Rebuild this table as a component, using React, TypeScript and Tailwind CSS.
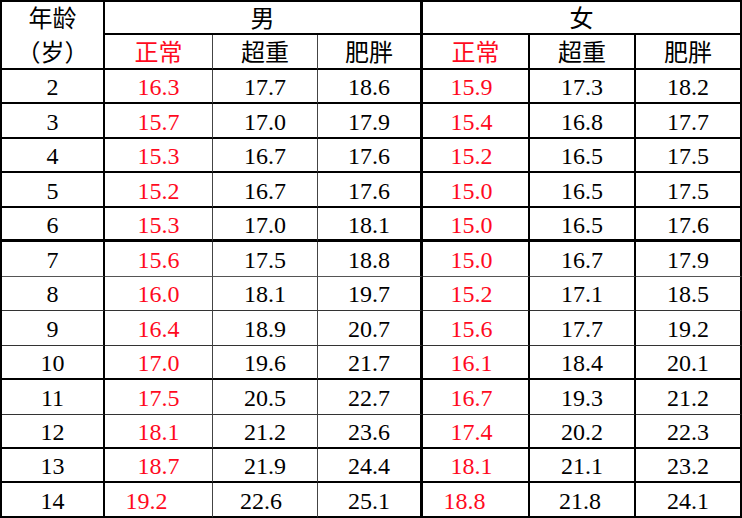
import React from 'react';

type Row = {
    age: string;
    male: [string, string, string];
    female: [string, string, string];
    line: string;
};

const rows: Row[] = [
    { age: '2', male: ['16.3', '17.7', '18.6'], female: ['15.9', '17.3', '18.2'], line: 'border-b-2 border-b-black' },
    { age: '3', male: ['15.7', '17.0', '17.9'], female: ['15.4', '16.8', '17.7'], line: 'border-b-2 border-b-black' },
    { age: '4', male: ['15.3', '16.7', '17.6'], female: ['15.2', '16.5', '17.5'], line: 'border-b-2 border-b-black' },
    { age: '5', male: ['15.2', '16.7', '17.6'], female: ['15.0', '16.5', '17.5'], line: 'border-b-2 border-b-black' },
    { age: '6', male: ['15.3', '17.0', '18.1'], female: ['15.0', '16.5', '17.6'], line: 'border-b-[3px] border-b-black' },
    { age: '7', male: ['15.6', '17.5', '18.8'], female: ['15.0', '16.7', '17.9'], line: 'border-b border-b-[#555]' },
    { age: '8', male: ['16.0', '18.1', '19.7'], female: ['15.2', '17.1', '18.5'], line: 'border-b border-b-[#333]' },
    { age: '9', male: ['16.4', '18.9', '20.7'], female: ['15.6', '17.7', '19.2'], line: 'border-b border-b-[#333]' },
    { age: '10', male: ['17.0', '19.6', '21.7'], female: ['16.1', '18.4', '20.1'], line: 'border-b-2 border-b-black' },
    { age: '11', male: ['17.5', '20.5', '22.7'], female: ['16.7', '19.3', '21.2'], line: 'border-b border-b-[#333]' },
    { age: '12', male: ['18.1', '21.2', '23.6'], female: ['17.4', '20.2', '22.3'], line: 'border-b-2 border-b-black' },
    { age: '13', male: ['18.7', '21.9', '24.4'], female: ['18.1', '21.1', '23.2'], line: 'border-b-2 border-b-black' },
    { age: '14', male: ['19.2', '22.6', '25.1'], female: ['18.8', '21.8', '24.1'], line: 'border-b-2 border-b-black' },
];

const red = 'text-[#ff0a1e]';
const cell = "flex items-center justify-center pt-[2px] font-['Liberation_Serif','Noto_Sans_CJK_SC',serif]";

export default function App() {
    return (
        <div className="w-[742px] h-[518px] bg-white overflow-hidden">
            <div className="grid grid-cols-[103px_108px_105px_105px_107px_106px_106px] grid-rows-[33px_35px_repeat(13,34.46px)] w-[742px] border-l-2 border-t-2 border-black font-['Liberation_Serif','Noto_Sans_CJK_SC',serif] text-[24px] leading-none text-black">
                <div className={`${cell} row-span-2 flex-col gap-[10px] pt-1 border-r-2 border-b-2 border-black`}>
                    <span>年龄</span>
                    <span>（岁）</span>
                </div>
                <div className={`${cell} col-span-3 border-r-[3px] border-b-2 border-black`}>男</div>
                <div className={`${cell} col-span-3 border-r-2 border-b-2 border-black`}>女</div>

                <div className={`${cell} border-b-2 border-b-black border-r border-r-[#444] ${red}`}>正常</div>
                <div className={`${cell} border-b-2 border-b-black border-r border-r-[#444]`}>超重</div>
                <div className={`${cell} border-b-2 border-b-black border-r-[3px] border-r-black`}>肥胖</div>
                <div className={`${cell} border-b-2 border-b-black border-r-2 border-r-black ${red}`}>正常</div>
                <div className={`${cell} border-b-2 border-b-black border-r-2 border-r-black`}>超重</div>
                <div className={`${cell} border-b-2 border-b-black border-r-2 border-r-black`}>肥胖</div>

                {rows.map((r, i) => {
                    const last = i === rows.length - 1;
                    return (
                        <React.Fragment key={r.age}>
                            <div className={`${cell} border-r-2 border-r-black ${r.line}`}>{r.age}</div>
                            <div className={`${cell} border-r border-r-[#444] ${r.line} ${red} ${last ? 'pr-6' : ''}`}>{r.male[0]}</div>
                            <div className={`${cell} border-r border-r-[#444] ${r.line} ${last ? 'pr-2' : ''}`}>{r.male[1]}</div>
                            <div className={`${cell} border-r-[3px] border-r-black ${r.line}`}>{r.male[2]}</div>
                            <div className={`${cell} border-r-2 border-r-black ${r.line} ${red} ${last ? 'pr-[22px]' : 'pr-2'}`}>{r.female[0]}</div>
                            <div className={`${cell} border-r-2 border-r-black ${r.line} ${last ? 'pr-1' : ''}`}>{r.female[1]}</div>
                            <div className={`${cell} border-r-2 border-r-black ${r.line}`}>{r.female[2]}</div>
                        </React.Fragment>
                    );
                })}
            </div>
        </div>
    );
}
